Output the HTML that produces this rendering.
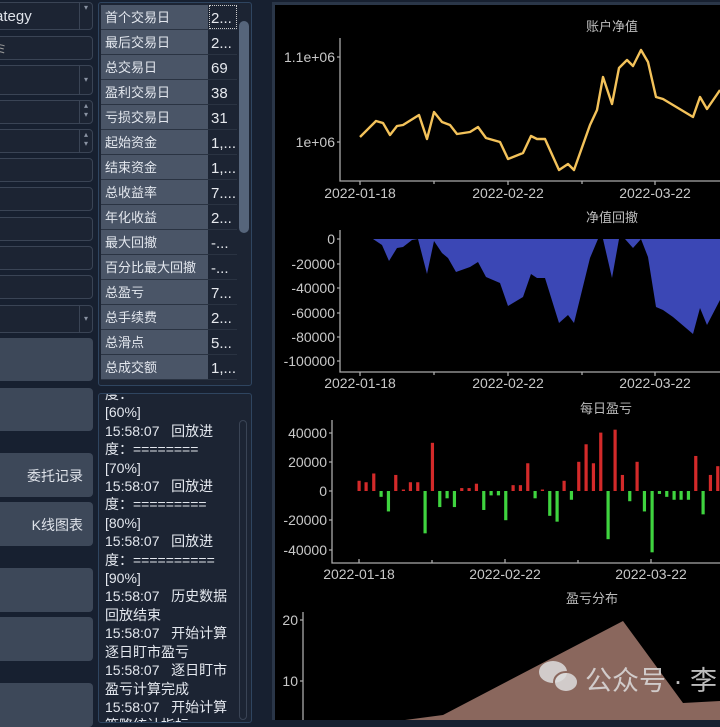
<!DOCTYPE html>
<html><head><meta charset="utf-8"><style>
*{margin:0;padding:0;box-sizing:border-box}
body{width:720px;height:720px;overflow:hidden;background:#172030;font-family:"Liberation Sans","Noto Sans CJK SC",sans-serif;position:relative;color:#dfe3ea}
.f{position:absolute;left:-6px;width:99px;background:#1c2433;border:1px solid #3a4455;border-radius:4px}
.ar{position:absolute;right:0;top:0;bottom:0;width:13px;border-left:1px solid #3a4455;color:#8a93a3;font-size:8px;text-align:center}
.b{position:absolute;left:-6px;width:99px;background:#3d4859;border-radius:4px;color:#dfe3ea;font-size:14px;text-align:right;padding-right:10px}
.tbl{position:absolute;left:98px;top:2px;width:154px;height:384px;border:1px solid #2f4560;border-radius:3px;background:#1c2433;overflow:hidden}
.row{position:absolute;left:2px;width:136px;height:25px;border-bottom:1px solid #2a3342}
.row .l{position:absolute;left:0;top:0;width:107px;height:24px;background:#4a5567;font-size:13px;padding:2px 0 0 4px;color:#e3e7ee}
.row .v{position:absolute;left:108px;top:0;width:28px;height:24px;font-size:15px;padding:5px 0 0 2px;color:#e6e9ee}
.sb{position:absolute;left:239px;width:10px;background:#56657b;border-radius:5px}
.log{position:absolute;left:98px;top:393px;width:154px;height:330px;border:1px solid #2f4560;border-radius:3px;background:#1c2433;overflow:hidden;font-size:14px;line-height:18.4px;padding:0 0 0 6px;color:#e3e7ee}
</style></head><body>
<div class="f" style="top:2px;height:28px;font-size:15px;padding:5px 0 0 0">ategy<div class="ar">▾</div></div>
<div class="f" style="top:36px;height:24px;font-size:12px;color:#999;padding:3px 0 0 0">ミ</div>
<div class="f" style="top:65px;height:30px"><div class="ar" style="padding-top:9px">▾</div></div>
<div class="f" style="top:100px;height:24px"><div class="ar">▴<br>▾</div></div>
<div class="f" style="top:129px;height:24px"><div class="ar">▴<br>▾</div></div>
<div class="f" style="top:158px;height:24px"></div>
<div class="f" style="top:187px;height:24px"></div>
<div class="f" style="top:217px;height:24px"></div>
<div class="f" style="top:246px;height:24px"></div>
<div class="f" style="top:275px;height:24px"></div>
<div class="f" style="top:305px;height:28px"><div class="ar" style="padding-top:8px">▾</div></div>
<div class="b" style="top:338px;height:43px"></div>
<div class="b" style="top:388px;height:43px"></div>
<div class="b" style="top:453px;height:44px;padding-top:13px">委托记录</div>
<div class="b" style="top:502px;height:44px;padding-top:13px">K线图表</div>
<div class="b" style="top:568px;height:44px"></div>
<div class="b" style="top:617px;height:44px"></div>
<div class="b" style="top:683px;height:44px"></div>

<div class="tbl">
<div class="row" style="top:2px"><div class="l">首个交易日</div><div class="v" style="outline:1px dotted #ccc;outline-offset:-1px">2...</div></div>
<div class="row" style="top:27px"><div class="l">最后交易日</div><div class="v">2...</div></div>
<div class="row" style="top:52px"><div class="l">总交易日</div><div class="v">69</div></div>
<div class="row" style="top:77px"><div class="l">盈利交易日</div><div class="v">38</div></div>
<div class="row" style="top:102px"><div class="l">亏损交易日</div><div class="v">31</div></div>
<div class="row" style="top:127px"><div class="l">起始资金</div><div class="v">1,...</div></div>
<div class="row" style="top:152px"><div class="l">结束资金</div><div class="v">1,...</div></div>
<div class="row" style="top:177px"><div class="l">总收益率</div><div class="v">7....</div></div>
<div class="row" style="top:202px"><div class="l">年化收益</div><div class="v">2...</div></div>
<div class="row" style="top:227px"><div class="l">最大回撤</div><div class="v">-...</div></div>
<div class="row" style="top:252px"><div class="l">百分比最大回撤</div><div class="v">-...</div></div>
<div class="row" style="top:277px"><div class="l">总盈亏</div><div class="v">7...</div></div>
<div class="row" style="top:302px"><div class="l">总手续费</div><div class="v">2...</div></div>
<div class="row" style="top:327px"><div class="l">总滑点</div><div class="v">5...</div></div>
<div class="row" style="top:352px"><div class="l">总成交额</div><div class="v">1,...</div></div>
<div class="sb" style="left:140px;top:18px;height:212px"></div>
</div>

<div class="log">
<div style="margin-top:-9px">度：</div>
<div>[60%]</div>
<div>15:58:07&nbsp;&nbsp;&nbsp;回放进</div>
<div>度：========</div>
<div>[70%]</div>
<div>15:58:07&nbsp;&nbsp;&nbsp;回放进</div>
<div>度：=========</div>
<div>[80%]</div>
<div>15:58:07&nbsp;&nbsp;&nbsp;回放进</div>
<div>度：==========</div>
<div>[90%]</div>
<div>15:58:07&nbsp;&nbsp;&nbsp;历史数据</div>
<div>回放结束</div>
<div>15:58:07&nbsp;&nbsp;&nbsp;开始计算</div>
<div>逐日盯市盈亏</div>
<div>15:58:07&nbsp;&nbsp;&nbsp;逐日盯市</div>
<div>盈亏计算完成</div>
<div>15:58:07&nbsp;&nbsp;&nbsp;开始计算</div>
<div>策略统计指标</div>
<div style="position:absolute;left:140px;top:26px;width:8px;height:300px;border:1px solid #3a4455;border-radius:4px"></div>
</div>

<svg style="position:absolute;left:0;top:0" width="720" height="720" viewBox="0 0 720 720" font-family="Liberation Sans, Noto Sans CJK SC, sans-serif">
<rect x="272" y="2" width="460" height="730" fill="#2a3648"/>
<rect x="275" y="5" width="450" height="720" fill="#000"/>
<g fill="#bdbdbd" font-size="13">
<text x="612" y="31" text-anchor="middle">账户净值</text>
<text x="612" y="222" text-anchor="middle">净值回撤</text>
<text x="606" y="413" text-anchor="middle">每日盈亏</text>
<text x="592" y="603" text-anchor="middle">盈亏分布</text>
</g>
<g stroke="#aaa" stroke-width="1.3" fill="none">
<path d="M340 38V181H720M337 57H340M337 142H340M360 181v4M434 181v3M508 181v4M582 181v3M655 181v4"/>
<path d="M340 230V372H720M337 239H340M337 264H340M337 288H340M337 313H340M337 337H340M337 361H340M360 372v4M434 372v3M508 372v4M582 372v3M655 372v4"/>
<path d="M332 420V563H720M329 433H332M329 462H332M329 491H332M329 520H332M329 550H332M359 563v-4M432 563v-3M505 563v-4M578 563v-3M651 563v-4"/>
<path d="M303 612V720M300 620H303M300 681H303"/>
</g>
<g fill="#c8c8c8" font-size="14">
<text x="335" y="62" text-anchor="end">1.1e+06</text>
<text x="335" y="147" text-anchor="end">1e+06</text>
<text x="360" y="198" text-anchor="middle">2022-01-18</text><text x="508" y="198" text-anchor="middle">2022-02-22</text><text x="655" y="198" text-anchor="middle">2022-03-22</text>
<text x="335" y="244" text-anchor="end">0</text><text x="335" y="269" text-anchor="end">-20000</text><text x="335" y="293" text-anchor="end">-40000</text><text x="335" y="318" text-anchor="end">-60000</text><text x="335" y="342" text-anchor="end">-80000</text><text x="335" y="366" text-anchor="end">-100000</text>
<text x="360" y="388" text-anchor="middle">2022-01-18</text><text x="508" y="388" text-anchor="middle">2022-02-22</text><text x="655" y="388" text-anchor="middle">2022-03-22</text>
<text x="327" y="438" text-anchor="end">40000</text><text x="327" y="467" text-anchor="end">20000</text><text x="327" y="496" text-anchor="end">0</text><text x="327" y="525" text-anchor="end">-20000</text><text x="327" y="555" text-anchor="end">-40000</text>
<text x="359" y="579" text-anchor="middle">2022-01-18</text><text x="505" y="579" text-anchor="middle">2022-02-22</text><text x="651" y="579" text-anchor="middle">2022-03-22</text>
<text x="298" y="625" text-anchor="end">20</text><text x="298" y="686" text-anchor="end">10</text>
</g>
<polyline fill="none" stroke="#f3c25a" stroke-width="2.4" stroke-linejoin="round" points="360,137 376,121 383,123 390,135 397,126 403,125 419,115 427,139 434,112 442,122 450,125 457,134 470,132 478,127 486,138 500,142 508,159 523,153 531,136 537,139 545,139 559,170 568,164 574,170 590,125 597,110 603,77 612,104 619,68 627,60 633,66 641,50 648,62 656,97 663,99 673,105 693,117 700,97 707,109 720,90"/>
<polygon fill="#3b47b5" points="360,239 373,239 382,245 389,261 397,248 403,247 412,240 418,239 427,274 434,241 442,253 448,258 456,272 470,267 478,262 486,277 500,283 508,306 523,297 531,274 537,278 545,278 559,323 568,315 574,323 590,258 598,239 603,239 612,278 619,239 625,239 633,248 641,239 648,257 656,307 663,310 673,317 693,334 700,308 707,325 720,300 720,239"/>
<g id="bars"></g>
<polygon fill="#8a675d" points="405,720 443,715 623,621 683,703 720,701 720,720"/>
<g fill="#ddd" fill-opacity="0.85">
<ellipse cx="553" cy="672" rx="14" ry="11"/><ellipse cx="566" cy="682" rx="12" ry="10" stroke="#8a675d" stroke-width="2"/>
<text x="585" y="690" font-size="27">公众号 · 李</text>
</g>
</svg>
<script>
var d=[[267,7],[288,6],[311,12],[333,-4],[355,-14],[377,11],[400,1],[421,6],[443,6],[465,-29],[487,33],[509,-11],[531,-5],[553,-11],[575,2],[597,2],[619,5],[641,-13],[663,-3],[685,-3],[707,-20],[729,4],[751,4],[773,19],[795,-5],[817,1],[839,-17],[861,-21],[882,7],[904,-6],[926,20],[948,32],[970,19],[992,40],[1014,-33],[1035,42],[1057,11],[1079,-7],[1101,20],[1123,-14],[1146,-42],[1168,-2],[1190,-4],[1212,-6],[1233,-6],[1255,-6],[1277,24],[1299,-16],[1321,11],[1343,17]];
var s='';d.forEach(function(p){var x=270+p[0]/3-1.5,h=Math.abs(p[1])*1.46,y=p[1]>0?491-h:491;s+='<rect x="'+x+'" y="'+y+'" width="3.2" height="'+h+'" fill="'+(p[1]>0?'#d42a2a':'#3fd43f')+'"/>';});
document.getElementById('bars').innerHTML=s;
</script>
</body></html>
